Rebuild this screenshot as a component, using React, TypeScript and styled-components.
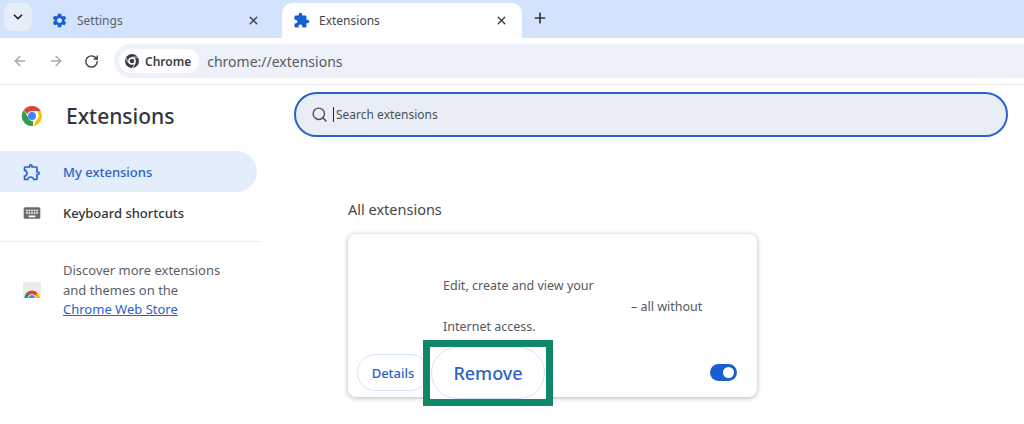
import React from 'react'
import styled, { createGlobalStyle } from 'styled-components'
import { ArrowLeft, ArrowRight, ChevronDown, Plus, RotateCw, Search, X } from 'lucide-react'
import { MdExtension, MdKeyboard, MdOutlineExtension, MdSettings } from 'react-icons/md'

const GlobalStyle = createGlobalStyle`
  html, body {
    margin: 0;
    padding: 0;
    background: #fff;
  }
  * {
    box-sizing: border-box;
  }
`

const Page = styled.div`
  width: 1024px;
  height: 424px;
  overflow: hidden;
  background: #fff;
  color: #3c3f43;
  font-family: "Noto Sans", "Open Sans", sans-serif;
`

const TabStrip = styled.div`
  display: flex;
  align-items: flex-end;
  height: 38px;
  padding-left: 4px;
  background: #d3e3fd;
`

const TabMenu = styled.div`
  display: flex;
  align-items: center;
  justify-content: center;
  align-self: flex-start;
  width: 28px;
  height: 28px;
  margin-top: 3px;
  margin-right: 8px;
  border-radius: 8px;
  background: #e6eef9;
  color: #1f2226;
`

const Tab = styled.div<{ $active?: boolean }>`
  position: relative;
  display: flex;
  align-items: center;
  gap: 9px;
  width: ${p => (p.$active ? '240px' : '234px')};
  height: 35px;
  margin-right: ${p => (p.$active ? '2px' : '8px')};
  padding: 0 14px 0 11px;
  border-radius: 10px 10px 0 0;
  background: ${p => (p.$active ? '#fff' : 'transparent')};
  font-size: 12px;
  color: ${p => (p.$active ? '#44474c' : '#5b6066')};
`

const TabIcon = styled.span`
  display: flex;
  color: #1a5fd0;
`

const TabLabel = styled.span`
  flex: 1;
`

const TabClose = styled.span`
  display: flex;
  color: #3c3f43;
`

const NewTab = styled.div`
  display: flex;
  align-self: center;
  margin-left: 8px;
  margin-top: -2px;
  color: #33363a;
`

const Toolbar = styled.div`
  display: flex;
  align-items: center;
  height: 47px;
  padding-left: 12px;
  background: #fff;
  border-bottom: 1px solid #ececec;
`

const NavButton = styled.span<{ $dim?: boolean }>`
  display: flex;
  width: 16px;
  margin-right: 20px;
  color: ${p => (p.$dim ? '#a3a6aa' : '#3c3f43')};
`

const Omnibox = styled.div`
  display: flex;
  align-items: center;
  flex: 1;
  height: 34px;
  margin-left: -6px;
  padding-left: 5px;
  border-radius: 17px 0 0 17px;
  background: #edf2fa;
`

const SiteChip = styled.div`
  display: flex;
  align-items: center;
  gap: 5px;
  height: 24px;
  padding: 0 8px 0 5px;
  border-radius: 12px;
  background: #fff;
  font-size: 12px;
  font-weight: 600;
  color: #3a3d41;
`

const Url = styled.span`
  margin-left: 8px;
  font-size: 14px;
  color: #555a60;
`

const Body = styled.div`
  display: flex;
  height: 339px;
`

const Sidebar = styled.nav`
  flex: none;
  width: 260px;
`

const Brand = styled.div`
  display: flex;
  align-items: center;
  gap: 22px;
  height: 66px;
  padding: 0 0 4px 20px;
`

const BrandTitle = styled.h1`
  margin: 0;
  font-size: 21px;
  font-weight: 500;
  color: #33363a;
`

const NavItem = styled.div<{ $active?: boolean }>`
  display: flex;
  align-items: center;
  gap: 21px;
  width: 257px;
  height: 41px;
  padding-left: 22px;
  border-radius: 0 21px 21px 0;
  background: ${p => (p.$active ? '#e3edfb' : 'transparent')};
  font-size: 13px;
  font-weight: 500;
  color: ${p => (p.$active ? '#2a62c9' : '#2f3236')};
`

const NavIcon = styled.span<{ $color: string }>`
  display: flex;
  width: 20px;
  color: ${p => p.$color};
`

const SideDivider = styled.div`
  height: 1px;
  margin-top: 8px;
  background: #ececec;
`

const Promo = styled.div`
  display: flex;
  align-items: center;
  gap: 22px;
  padding: 19px 0 0 23px;
`

const PromoText = styled.div`
  font-size: 13px;
  line-height: 19.7px;
  color: #5b5f64;
`

const PromoLink = styled.span`
  display: block;
  color: #2a62c9;
  text-decoration: underline;
`

const Main = styled.main`
  flex: 1;
  padding: 7px 16px 0 34px;
`

const SearchBar = styled.div`
  display: flex;
  align-items: center;
  gap: 5px;
  height: 45px;
  padding-left: 15px;
  border: 2px solid #2a62c9;
  border-radius: 23px;
  background: #e9eef6;
  font-size: 12px;
  color: #4a4e53;
`

const Caret = styled.span`
  width: 1px;
  height: 15px;
  margin-right: -3px;
  background: #1f2226;
`

const Section = styled.section`
  margin: 62px 0 0 54px;
`

const SectionTitle = styled.h2`
  margin: 0 0 15px;
  font-size: 14.5px;
  font-weight: 400;
  line-height: 20px;
  color: #44474c;
`

const Card = styled.div`
  position: relative;
  width: 409px;
  height: 163px;
  padding: 42px 40px 0 95px;
  border-radius: 8px;
  background: #fff;
  box-shadow: 0 1px 5px rgba(60, 64, 67, 0.4);
`

const Description = styled.p`
  margin: 0;
  font-size: 12.5px;
  line-height: 20.5px;
  color: #55595e;
`

const RightLine = styled.span`
  display: block;
  padding-left: 188px;
`

const CardActions = styled.div`
  position: absolute;
  left: 9px;
  right: 20px;
  bottom: 6px;
  display: flex;
  align-items: center;
`

const PillButton = styled.button`
  width: 72px;
  height: 37px;
  padding: 0;
  border: 1px solid #d3e3fd;
  border-radius: 19px;
  background: #fff;
  font-family: inherit;
  font-size: 13px;
  font-weight: 500;
  color: #2a62c9;
`

const Toggle = styled.span`
  position: relative;
  width: 27px;
  height: 17px;
  margin-left: auto;
  margin-bottom: 1px;
  border-radius: 9px;
  background: #1a5fd0;
  &::after {
    content: "";
    position: absolute;
    top: 3px;
    right: 3px;
    width: 11px;
    height: 11px;
    border-radius: 50%;
    background: #fff;
  }
`

const Highlight = styled.div`
  position: absolute;
  left: 75px;
  top: 106px;
  display: flex;
  width: 130px;
  height: 66px;
  border: 7px solid #0f8768;
  background: #fff;
`

const RemoveButton = styled.button`
  width: 114px;
  height: 52px;
  margin-left: 1px;
  padding: 0;
  border: 1px solid #d3e3fd;
  border-radius: 26px;
  background: #fff;
  font-family: inherit;
  font-size: 18px;
  font-weight: 500;
  color: #2a62c9;
`

const ChromeLogo = ({ size }: { size: number }) => (
  <svg width={size} height={size} viewBox="0 0 48 48">
    <path d="M24 4a20 20 0 0 1 17.3 10H24a10 10 0 0 0-9.4 6.6L7.7 12A20 20 0 0 1 24 4z" fill="#db4437" />
    <path d="M41.3 14A20 20 0 0 1 26 43.9L34.7 29a10 10 0 0 0-1.5-15z" fill="#f4c20d" />
    <path d="M7.7 12l8.6 15A10 10 0 0 0 26 34l-.1 9.900A20 20 0 0 1 7.700 12z" fill="#2f9e4f" />
    <circle cx="24" cy="24" r="8" fill="#4285f4" />
  </svg>
)

const ChromeMono = () => (
  <svg width="16" height="16" viewBox="0 0 48 48">
    <circle cx="24" cy="24" r="21" fill="#3a3d41" />
    <circle cx="24" cy="24" r="11.500" fill="#fff" />
    <circle cx="24" cy="24" r="7" fill="#3a3d41" />
    <path d="M24 12.500h19M14 30l-9.500-16.500M34 30l-9.500 16.500" stroke="#fff" strokeWidth="2.500" />
  </svg>
)

const StoreIcon = () => (
  <svg width="18" height="18" viewBox="0 0 18 18">
    <rect x="0" y="0" width="18" height="16" fill="#ececec" />
    <path d="M1.500 16a7.500 7.500 0 0 1 15 0z" fill="#d9483b" />
    <path d="M1.500 16a7.500 7.500 0 0 1 3-6l3 6z" fill="#2f9e4f" />
    <path d="M16.500 16a7.500 7.500 0 0 0-2-5.200L10.500 16z" fill="#f4c20d" />
    <circle cx="9" cy="16" r="3.800" fill="#fff" />
    <path d="M6 16a3 3 0 0 1 6 0z" fill="#4285f4" />
  </svg>
)

export default function App() {
  return (
    <Page>
      <GlobalStyle />
      <TabStrip>
        <TabMenu><ChevronDown size={14} strokeWidth={3} /></TabMenu>
        <Tab>
          <TabIcon><MdSettings size={17} /></TabIcon>
          <TabLabel>Settings</TabLabel>
          <TabClose><X size={13} strokeWidth={2.500} /></TabClose>
        </Tab>
        <Tab $active>
          <TabIcon><MdExtension size={17} /></TabIcon>
          <TabLabel>Extensions</TabLabel>
          <TabClose><X size={13} strokeWidth={2.500} /></TabClose>
        </Tab>
        <NewTab><Plus size={16} strokeWidth={2.500} /></NewTab>
      </TabStrip>
      <Toolbar>
        <NavButton $dim><ArrowLeft size={16} /></NavButton>
        <NavButton $dim><ArrowRight size={16} /></NavButton>
        <NavButton><RotateCw size={15} strokeWidth={2.200} /></NavButton>
        <Omnibox>
          <SiteChip><ChromeMono />Chrome</SiteChip>
          <Url>chrome://extensions</Url>
        </Omnibox>
      </Toolbar>
      <Body>
        <Sidebar>
          <Brand>
            <ChromeLogo size={24} />
            <BrandTitle>Extensions</BrandTitle>
          </Brand>
          <NavItem $active>
            <NavIcon $color="#2a62c9"><MdOutlineExtension size={20} /></NavIcon>
            My extensions
          </NavItem>
          <NavItem>
            <NavIcon $color="#6a6d71"><MdKeyboard size={20} /></NavIcon>
            Keyboard shortcuts
          </NavItem>
          <SideDivider />
          <Promo>
            <StoreIcon />
            <PromoText>
              Discover more extensions
              <br />
              and themes on the
              <PromoLink>Chrome Web Store</PromoLink>
            </PromoText>
          </Promo>
        </Sidebar>
        <Main>
          <SearchBar>
            <Search size={17} />
            <Caret />
            Search extensions
          </SearchBar>
          <Section>
            <SectionTitle>All extensions</SectionTitle>
            <Card>
              <Description>
                Edit, create and view your
                <RightLine>– all without</RightLine>
                Internet access.
              </Description>
              <CardActions>
                <PillButton>Details</PillButton>
                <Toggle />
              </CardActions>
              <Highlight>
                <RemoveButton>Remove</RemoveButton>
              </Highlight>
            </Card>
          </Section>
        </Main>
      </Body>
    </Page>
  )
}
